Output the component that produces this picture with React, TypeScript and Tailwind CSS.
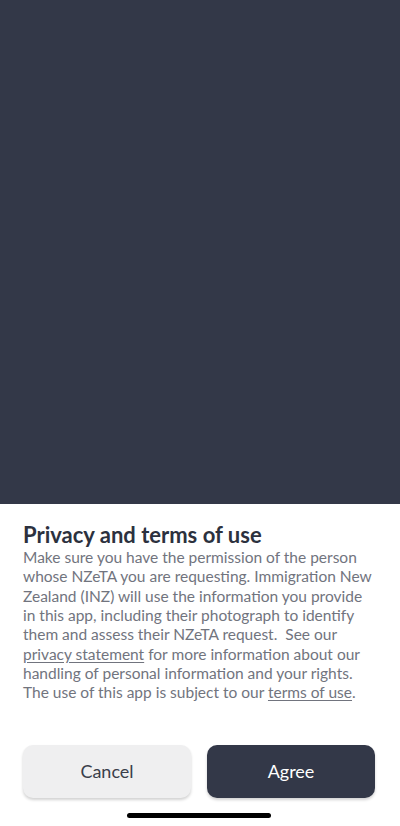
export default function App() {
  return (
    <div
      className="flex h-[826px] w-full flex-col bg-white"
      style={{ fontFamily: "Lato, 'Noto Sans', sans-serif" }}
    >
      {/* dark backdrop */}
      <div className="h-[504px] shrink-0 bg-[#333848]" />

      {/* sheet */}
      <div className="flex flex-1 flex-col pl-[23px] pr-[25px] pt-[17px]">
        <h1 className="text-[22px] font-bold leading-[28px] text-[#2c313e]">
          Privacy and terms of use
        </h1>
        <p className="mt-[-1px] text-[15.5px] leading-[19.35px] text-[#71747e]">
          Make sure you have the permission of the person whose NZeTA you are requesting. Immigration New
          Zealand (INZ) will use the information you provide in this app, including their photograph to identify
          them and assess their NZeTA request.&nbsp; See our{" "}
          <span className="underline underline-offset-2">privacy statement</span> for more information about our
          handling of personal information and your rights. The use of this app is subject to our{" "}
          <span className="underline underline-offset-2">terms of use</span>.
        </p>

        <div className="mt-auto flex gap-4 pb-[15px]">
          <button
            type="button"
            className="flex h-[53px] flex-1 items-center justify-center rounded-[10px] bg-[#efeff0] text-[18px] text-[#3a3e4a] shadow-[0_2px_3px_rgba(0,0,0,0.18)]"
          >
            Cancel
          </button>
          <button
            type="button"
            className="flex h-[53px] flex-1 items-center justify-center rounded-[10px] bg-[#333848] text-[18px] text-white shadow-[0_2px_3px_rgba(0,0,0,0.18)]"
          >
            Agree
          </button>
        </div>
        <div className="flex justify-center pb-[8px]">
          <div className="h-[5px] w-[144px] rounded-full bg-black" />
        </div>
      </div>
    </div>
  )
}
